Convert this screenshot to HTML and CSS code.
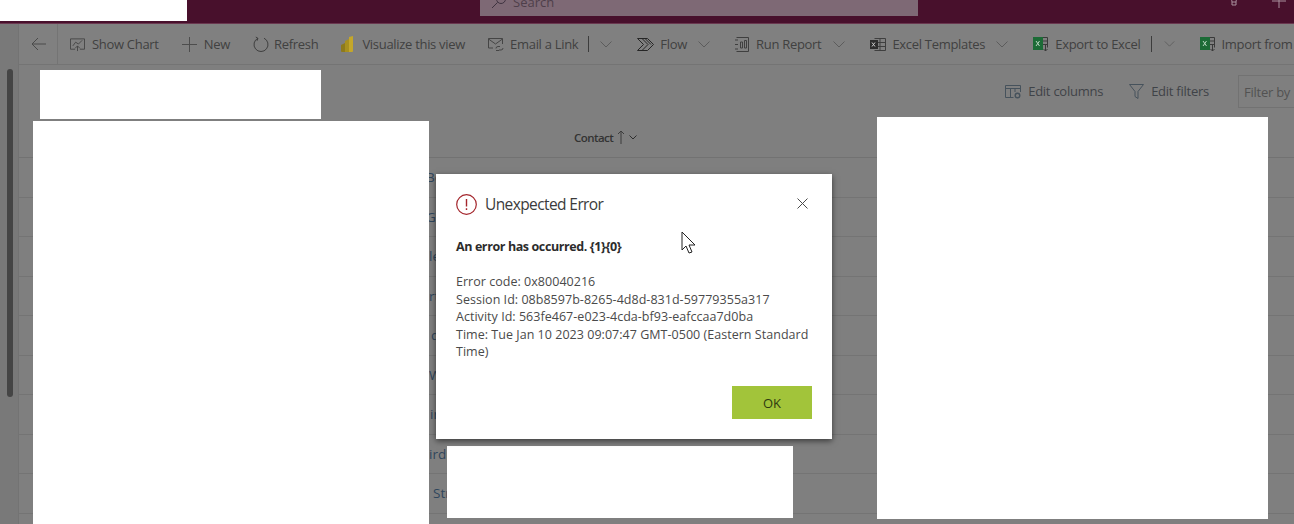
FILE: index.html
```html
<!DOCTYPE html>
<html lang="en">
<head>
    <meta charset="UTF-8">
    <meta name="viewport" content="width=device-width, initial-scale=1.0">
    <title>Unexpected Error</title>
    <link rel="stylesheet" href="styles.css">
</head>
<body>
    <header class="topbar">
        <div class="search">
            <svg class="search-icon" width="16" height="16" viewBox="0 0 16 16" fill="none" stroke="#3f3340" stroke-width="1"><circle cx="10" cy="5" r="4.5"/><path d="M6.6 8.4 1 14"/></svg>
            <span>Search</span>
        </div>
        <div class="top-icons">
            <svg width="14" height="16" viewBox="0 0 14 16" fill="none" stroke="#a9909d"><path d="M3 1c0 3 2 4 2 7h4c0-3 2-4 2-7M5 8v3h4V8"/></svg>
            <svg width="16" height="16" viewBox="0 0 16 16" fill="none" stroke="#a9909d"><path d="M8 0v14M1 7h14"/></svg>
        </div>
    </header>

    <div class="shell">
        <aside class="rail"><div class="rail-thumb"></div></aside>
        <main class="main">
            <div class="toolbar">
                <button class="back">
                    <svg width="15" height="14" viewBox="0 0 15 14" fill="none" stroke="#4a4a4a"><path d="M15 7H1M7 1 1 7l6 6"/></svg>
                </button>
                <div class="commands">
                    <div class="cmd">
                        <svg width="15" height="15" viewBox="0 0 16 15" fill="none" stroke="#454545"><path d="M.5 1.5h15v11h-5M5.5 12.5h-5v-11M3 9l3-4 3 2 4-4M8 14.5V9M5.5 11.5 8 9l2.5 2.5"/></svg>
                        <span>Show Chart</span>
                    </div>
                    <div class="cmd">
                        <svg width="15" height="15" viewBox="0 0 15 15" fill="none" stroke="#4d4d4d"><path d="M7.5 0v15M0 7.5h15"/></svg>
                        <span>New</span>
                    </div>
                    <div class="cmd gap-5">
                        <svg width="16" height="16" viewBox="0 0 16 16" fill="none" stroke="#3f3f3f"><path d="M5 2.2a7 7 0 1 0 6 0M2.8 1 5 2.4 4 4.8"/></svg>
                        <span>Refresh</span>
                    </div>
                    <div class="cmd gap-8">
                        <svg width="13" height="16" viewBox="0 0 13 16"><path fill="#8e7a1c" d="M0 9l4-2v9H1a1 1 0 0 1-1-1z"/><path fill="#a8901e" d="M4 5l4-2v13H4z"/><path fill="#c4a72a" d="M8 1l4-1v15a1 1 0 0 1-1 1H8z"/></svg>
                        <span>Visualize this view</span>
                    </div>
                    <div class="cmd gap-6">
                        <svg width="16" height="15" viewBox="0 0 16 15" fill="none" stroke="#454545"><path d="M5 11H.5V1.5h14V7M.5 2l7 5 7-5"/><path d="M8 11.5a2 2 0 0 1 2-2h2M15 11a2 2 0 0 1-2 2h-2M8 13.5h3"/></svg>
                        <span>Email a Link</span>
                        <i class="sep"></i>
                        <svg class="chev" width="12" height="7" viewBox="0 0 12 7" fill="none" stroke="#5c5c5c"><path d="m.5.5 5.500 5.500 5.500-5.500"/></svg>
                    </div>
                    <div class="cmd gap-6">
                        <svg width="17" height="13" viewBox="0 0 17 13" fill="none" stroke="#262626"><path d="M.5.5h10l6 6-6 6H.5l6-6zM5 .5l6 6-6 6M8 .5l6 6"/></svg>
                        <span>Flow</span>
                        <svg class="chev" width="12" height="7" viewBox="0 0 12 7" fill="none" stroke="#5c5c5c"><path d="m.5.5 5.500 5.500 5.500-5.500"/></svg>
                    </div>
                    <div class="cmd">
                        <svg width="14" height="15" viewBox="0 0 14 15" fill="none" stroke="#3f3f3f"><path d="M1.500.5h12v14h-12M0 3h3M0 7.500h3M0 12h3M5.500 5v6h2V5zM9.500 3.500V11h2V3.500z"/></svg>
                        <span>Run Report</span>
                        <svg class="chev" width="12" height="7" viewBox="0 0 12 7" fill="none" stroke="#5c5c5c"><path d="m.5.5 5.500 5.500 5.500-5.500"/></svg>
                    </div>
                    <div class="cmd gap-6">
                        <svg width="16" height="13" viewBox="0 0 16 13"><path fill="none" stroke="#3f3f3f" d="M4.500.5h11v12h-11M4.500 4.500h11M4.500 8.500h11M10 .5v12"/><rect y="2" width="8" height="9" fill="#2e2e2e"/><path stroke="#ccc" d="m2 4.500 3 4m0-4-3 4"/></svg>
                        <span>Excel Templates</span>
                        <svg class="chev" width="12" height="7" viewBox="0 0 12 7" fill="none" stroke="#5c5c5c"><path d="m.5.5 5.500 5.500 5.500-5.500"/></svg>
                    </div>
                    <div class="cmd">
                        <svg width="15" height="16" viewBox="0 0 15 16"><rect y="1" width="10" height="13" fill="#1c6b36"/><path stroke="#b7d5bf" fill="none" d="m3 5 3.500 5m0-5L3 10"/><path stroke="#3a3a3a" fill="none" d="M10 1.500h4.500v10M10 5h4.500M10 8.500h4.500M12.500 9v6m-2-2 2 2 2-2"/></svg>
                        <span>Export to Excel</span>
                        <i class="sep sep-tight"></i>
                        <svg class="chev" width="11" height="6" viewBox="0 0 12 7" fill="none" stroke="#5c5c5c"><path d="m.5.5 5.500 5.500 5.500-5.500"/></svg>
                    </div>
                    <div class="cmd">
                        <svg width="15" height="16" viewBox="0 0 15 16"><rect y="1" width="10" height="13" fill="#1c6b36"/><path stroke="#b7d5bf" fill="none" d="m3 5 3.500 5m0-5L3 10"/><path stroke="#3a3a3a" fill="none" d="M10 1.500h4.500v10M10 5h4.500M10 8.500h4.500M12.500 9v6m-2-2 2 2 2-2"/></svg>
                        <span>Import from</span>
                    </div>
                </div>
            </div>

            <div class="view-actions">
                <div class="action">
                    <svg width="16" height="15" viewBox="0 0 16 15" fill="none" stroke="#46525c"><path d="M.5 1.500h15V8M.5 1.500v12h8M.5 4.500h15M5.500 4.500v9M10 4.500V8"/><circle cx="12.500" cy="11.500" r="2.300" stroke-width="1.400"/></svg>
                    <span>Edit columns</span>
                </div>
                <div class="action">
                    <svg width="15" height="15" viewBox="0 0 15 15" fill="none" stroke="#46525c"><path d="M.5.5h14L9 7.500v7l-3-2v-5z"/></svg>
                    <span>Edit filters</span>
                </div>
                <div class="filter-box">Filter by</div>
            </div>

            <div class="grid">
                <div class="grid-head">
                    <span class="col-title">Contact</span>
                    <svg width="8" height="14" viewBox="0 0 8 14" fill="none" stroke="#3c3c3c"><path d="M4 14V1M1 4l3-3 3 3"/></svg>
                    <svg width="8" height="5" viewBox="0 0 8 5" fill="none" stroke="#2e2e2e"><path d="m.5.5 3.500 3.500 3.500-3.500"/></svg>
                </div>
                <div class="row"><a class="name">Bo</a></div>
                <div class="row"><a class="name">Gu</a></div>
                <div class="row"><a class="name tab-3">le</a></div>
                <div class="row"><a class="name tab-3">rt</a></div>
                <div class="row"><a class="name tab-5">d</a></div>
                <div class="row"><a class="name tab-3">W</a></div>
                <div class="row"><a class="name tab-4">ir</a></div>
                <div class="row"><a class="name tab-3">irdr</a></div>
                <div class="row"><a class="name tab-7">Str</a></div>
                <div class="row"></div>
            </div>
        </main>
    </div>

    <!-- redacted blocks over the page -->
    <div class="mask mask-logo"></div>
    <div class="mask mask-title"></div>
    <div class="mask mask-left"></div>
    <div class="mask mask-right"></div>
    <div class="mask mask-bottom"></div>

    <div class="dialog">
        <div class="dialog-head">
            <svg class="err-icon" width="21" height="21" viewBox="0 0 21 21" fill="none"><circle cx="10.5" cy="10.5" r="9.8" stroke="#a4262c" stroke-width="1.2"/><path stroke="#a4262c" stroke-width="1.4" d="M10.5 5v7.5M10.5 14.3V16"/></svg>
            <h2>Unexpected Error</h2>
            <svg class="close" width="11" height="11" viewBox="0 0 11 11" fill="none" stroke="#4a4a4a"><path d="m.5.5 10 10m0-10-10 10"/></svg>
        </div>
        <p class="err-title">An error has occurred. {1}{0}</p>
        <p class="err-body">Error code: 0x80040216<br>Session Id: 08b8597b-8265-4d8d-831d-59779355a317<br>Activity Id: 563fe467-e023-4cda-bf93-eafccaa7d0ba<br>Time: Tue Jan 10 2023 09:07:47 GMT-0500 (Eastern Standard Time)</p>
        <div class="dialog-foot"><button class="ok">OK</button></div>
    </div>

    <svg class="cursor" width="16" height="24" viewBox="0 0 16 24"><path fill="#fff" stroke="#222" d="M1 1v18l4-4 3 7 3-1-3-7h6z"/></svg>
</body>
</html>
```

FILE: styles.css
```css
* {
    box-sizing: border-box;
}

html, body {
    height: 100%;
}

body {
    margin: 0;
    overflow: hidden;
    position: relative;
    background: #7f7f7f;
    font-family: "Open Sans", "Noto Sans", sans-serif;
    color: #3e3e3e;
}

/* top bar */
.topbar {
    height: 24px;
    background: #48102c;
    border-bottom: 1px solid #6a3850;
    display: flex;
    justify-content: flex-end;
    position: relative;
}

.search {
    position: absolute;
    left: 480px;
    top: 0;
    width: 438px;
    height: 16px;
    background: #7e6975;
    display: flex;
    align-items: flex-end;
    gap: 6px;
    padding-left: 11px;
    font-size: 13px;
    line-height: 13px;
    color: #4e3f4a;
    overflow: hidden;
}

.search-icon {
    flex: none;
    margin-bottom: 6px;
}

.search span {
    margin-bottom: 7px;
}

.top-icons {
    display: flex;
    gap: 30px;
    margin-top: -6px;
    padding-right: 7px;
}

/* page body */
.shell {
    display: flex;
    height: 500px;
}

.rail {
    width: 19px;
    flex: none;
    background: #797979;
    border-right: 1px solid #737373;
    padding: 45px 0 0 7px;
}

.rail-thumb {
    width: 6px;
    height: 328px;
    border-radius: 3px;
    background: #454545;
}

.main {
    flex: 1;
    min-width: 0;
    overflow: hidden;
}

.toolbar {
    height: 41px;
    display: flex;
    align-items: center;
    border-bottom: 1px solid #747474;
    background: #808080;
    overflow: hidden;
}

.back {
    width: 39px;
    height: 40px;
    flex: none;
    background: none;
    border: 0;
    border-right: 1px solid #747474;
    padding: 3px 0 0 12px;
    text-align: left;
}

.commands {
    display: flex;
    align-items: center;
    gap: 23px;
    padding: 0 0 0 12px;
    white-space: nowrap;
    font-size: 13px;
    letter-spacing: -.3px;
    color: #414141;
}

.cmd {
    display: flex;
    align-items: center;
    gap: 7px;
}

.gap-5 {
    gap: 5px;
}

.gap-6 {
    gap: 6px;
}

.gap-8 {
    gap: 8px;
}

.cmd svg {
    flex: none;
}

.chev {
    margin-left: 5px;
    margin-right: 2px;
}

.sep {
    width: 1px;
    height: 16px;
    background: #3c3c3c;
    margin-left: 4px;
}

.sep-tight {
    margin-left: 3px;
}

.view-actions {
    height: 52px;
    display: flex;
    justify-content: flex-end;
    align-items: center;
    gap: 26px;
    font-size: 13px;
    letter-spacing: -.25px;
    color: #3f4348;
    overflow: hidden;
    white-space: nowrap;
}

.action {
    display: flex;
    align-items: center;
    gap: 7px;
}

.filter-box {
    width: 56px;
    height: 33px;
    flex: none;
    margin-left: 3px;
    border: 1px solid #727272;
    border-right: 0;
    padding: 7px 0 0 5px;
    color: #525252;
    overflow: hidden;
}

.grid-head {
    height: 41px;
    border-bottom: 1px solid #727272;
    padding: 0 0 0 555px;
    display: flex;
    align-items: center;
    gap: 4px;
}

.col-title {
    font-size: 11.5px;
    font-weight: 600;
    letter-spacing: -.55px;
    color: #333;
}

.row {
    height: 39.5px;
    border-bottom: 1px solid #747474;
    padding-left: 407px;
    display: flex;
    align-items: center;
}

.name {
    font-size: 13.5px;
    color: #2f465c;
}

.tab-3 {
    padding-left: 3px;
}

.tab-4 {
    padding-left: 4px;
}

.tab-5 {
    padding-left: 5px;
}

.tab-7 {
    padding-left: 7px;
}

/* white blocks hiding parts of the page */
.mask {
    position: absolute;
    background: #fff;
}

.mask-logo {
    left: 0;
    top: 0;
    width: 187px;
    height: 21px;
}

.mask-title {
    left: 40px;
    top: 70px;
    width: 281px;
    height: 49px;
}

.mask-left {
    left: 33px;
    top: 121px;
    width: 396px;
    height: 403px;
}

.mask-right {
    left: 877px;
    top: 117px;
    width: 391px;
    height: 402px;
}

.mask-bottom {
    left: 447px;
    top: 446px;
    width: 346px;
    height: 72px;
}

/* dialog */
.dialog {
    position: absolute;
    left: 436px;
    top: 174px;
    width: 396px;
    height: 265px;
    background: #fff;
    box-shadow: 0 2px 6px rgba(0, 0, 0, .55);
    padding: 20px 20px 0;
    display: flex;
    flex-direction: column;
}

.dialog-head {
    display: flex;
    align-items: center;
    height: 21px;
    gap: 8px;
}

.dialog-head h2 {
    margin: 0 0 2px;
    font-size: 15.5px;
    font-weight: 400;
    letter-spacing: -.6px;
    color: #3b3b3b;
}

.err-icon {
    flex: none;
}

.close {
    margin-left: auto;
    margin-top: -3px;
    margin-right: 4px;
}

.err-title {
    margin: 23px 0 0;
    font-size: 12.5px;
    font-weight: 700;
    letter-spacing: -.4px;
    color: #2c2c2c;
    line-height: 17px;
}

.err-body {
    margin: 18px 0 0;
    font-size: 12.5px;
    line-height: 17.5px;
    letter-spacing: .03px;
    color: #4a4a4a;
}

.dialog-foot {
    margin-top: auto;
    display: flex;
    justify-content: flex-end;
    padding-bottom: 20px;
}

.ok {
    width: 80px;
    height: 33px;
    border: 0;
    background: #a2c43a;
    font-family: inherit;
    font-size: 13px;
    color: #2e3a10;
}

.cursor {
    position: absolute;
    left: 681px;
    top: 231px;
}
```
